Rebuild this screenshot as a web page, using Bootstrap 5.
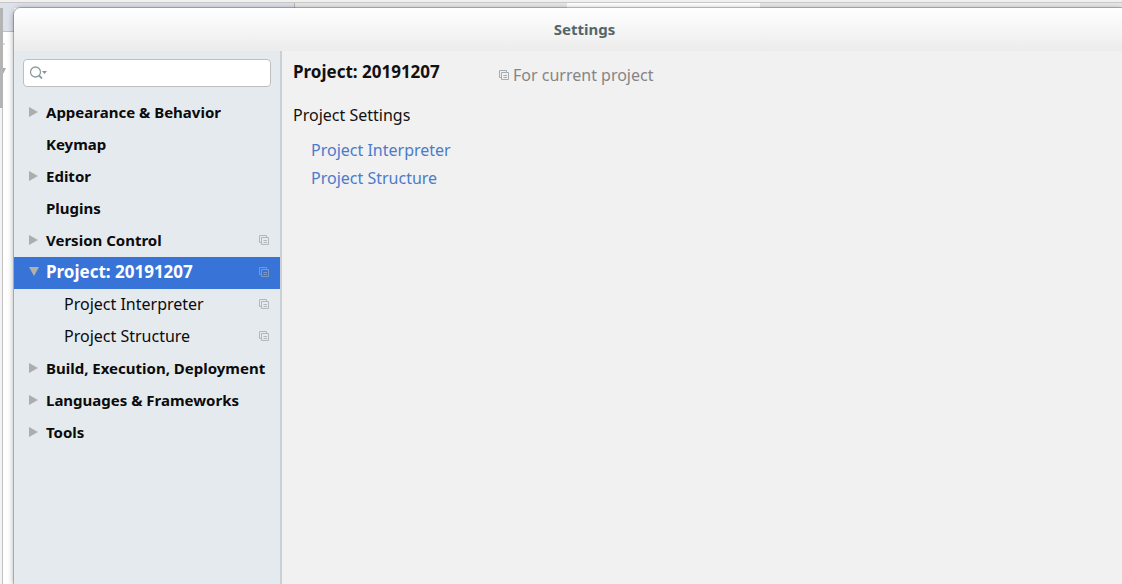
<!DOCTYPE html>
<html lang="en">
<head>
<meta charset="utf-8">
<meta name="viewport" content="width=device-width, initial-scale=1">
<title>Settings</title>
<link href="https://cdn.jsdelivr.net/npm/bootstrap@5.3.0/dist/css/bootstrap.min.css" rel="stylesheet">
<style>
  body { font-family: "Noto Sans", "Open Sans", sans-serif; font-size: 16px; line-height: 20px; color: #111; background: #fff; }
  .desktop { padding: 8px 0 0 14px; isolation: isolate; }

  /* main editor window, visible behind the dialog */
  .editor-behind { z-index: -1; }
  .editor-top { height: 8px; background: #e8e8e8; border-top: 2px solid #f0f0ee; }
  .editor-top::before { content: ""; display: block; height: 1px; background: #c8c8c8; }
  .editor-tabs { height: 5px; }
  .tab-project { flex: 0 0 295px; background: #dde1ea; border-right: 1px solid #b8b8b8; }
  .tab-active { flex: 0 0 193px; margin-left: 272px; background: #fff; }
  .gutter-head { height: 24px; background: #dde1ea; border-bottom: 1px solid #c0c0c0; }
  .gutter { width: 14px; }
  .gutter-edge { width: 3px; border-right: 1px solid #c2c2c2; background: #f4f4f4; }
  .gutter-thumb { height: 100px; width: 3px; background: #b4b4b4; }
  .gutter svg { left: 3px; top: 34px; }

  .dialog { border-radius: 7px 0 0 0; box-shadow: 0 1px 6px rgba(0,0,0,.4), 0 0 0 1px rgba(0,0,0,.2); background: #f1f1f1; overflow: hidden; }
  .titlebar { height: 43px; padding: 0 0 2px 33px; background: linear-gradient(#fff, #ececec); color: #54666c; font-size: 15px; font-weight: 700; }
  .sidebar { flex: 0 0 268px; min-width: 0; background: #e5eaee; border-right: 2px solid #cbd0d4; }
  .search-box { margin: 8px 9px 10px; height: 28px; background: #fff; border: 1px solid #bcbfc2; border-radius: 4px; }
  .search-box input { outline: 0; min-width: 0; }
  .tree-row { height: 32px; padding: 0 10px 2px 14px; color: #0b0b0b; font-size: 15px; font-weight: 700; white-space: nowrap; }
  .tree-row.sub { padding-left: 50px; font-size: 16px; font-weight: 400; }
  .tree-row.active { background: #3874d8; color: #fff; font-size: 17px; }
  .caret-slot { flex: 0 0 18px; height: 12px; }
  .copy-icon { color: #b1b8bd; flex: 0 0 11px; }
  .active .copy-icon { color: #7a99c2; }
  .pane { padding: 11px 11px; }
  .page-title { font-size: 17px; line-height: 20px; font-weight: 700; width: 206px; }
  .scope-note { color: #858585; padding-top: 3px; gap: 3px; }
  .scope-note .copy-icon { color: #a3adb3; }
  .intro { margin-top: 20px; }
  .page-links { margin: 11px 0 0 18px; }
  .page-links a { color: #4b7bcb; line-height: 28px; }
</style>
</head>
<body class="overflow-hidden">
<svg class="d-none" aria-hidden="true">
  <symbol id="copy" viewBox="0 0 11 11"><path d="M2.500 7.500h-2v-7h7v2M2.500 2.500h7v7h-7zM4.500 5.500h3.500M4.500 7.500h3.500" fill="none" stroke="currentColor"/></symbol>
  <symbol id="closed" viewBox="0 0 12 12"><path d="M1 1l9 5-9 5z" fill="#adadad"/></symbol>
  <symbol id="open" viewBox="0 0 12 12"><path d="M1 1h10L6 10z" fill="#b3b0a8"/></symbol>
</svg>

<div class="desktop position-relative vh-100 d-flex flex-column">
  <div class="editor-behind position-absolute top-0 start-0 w-100 h-100 d-flex flex-column" aria-hidden="true">
    <div class="editor-top">
      <div class="editor-tabs d-flex"><div class="tab-project"></div><div class="tab-active"></div></div>
    </div>
    <div class="gutter flex-grow-1 position-relative">
      <div class="gutter-head"></div>
      <div class="gutter-edge position-absolute top-0 h-100"><div class="gutter-thumb"></div></div>
      <svg class="position-absolute" width="6" height="34" viewBox="0 0 6 34"><path d="M0 2h2" stroke="#bbb"/><path d="M0 26h3L0 32z" fill="#aaa"/></svg>
    </div>
  </div>

  <div class="dialog flex-grow-1 d-flex flex-column">
    <header class="titlebar d-flex align-items-center justify-content-center">Settings</header>
    <div class="d-flex flex-grow-1">
      <aside class="sidebar">
        <label class="search-box d-flex align-items-center ps-1">
          <svg class="flex-shrink-0" width="20" height="16" viewBox="0 0 20 16" aria-hidden="true"><circle cx="7.500" cy="7" r="5" fill="none" stroke="#8d9ba2" stroke-width="1.300"/><path d="M11 10.500l3 3" stroke="#8d9ba2" stroke-width="1.800"/><path d="M14 6h5l-2.500 3z" fill="#84939b"/></svg>
          <input type="search" class="border-0 bg-transparent flex-grow-1 p-0" aria-label="Search settings">
        </label>
        <nav aria-label="Settings sections">
          <a href="#" class="tree-row d-flex align-items-center text-decoration-none"><svg class="caret-slot" viewBox="0 0 18 12"><use href="#closed" width="12" height="12"/></svg>Appearance &amp; Behavior</a>
          <a href="#" class="tree-row d-flex align-items-center text-decoration-none"><span class="caret-slot"></span>Keymap</a>
          <a href="#" class="tree-row d-flex align-items-center text-decoration-none"><svg class="caret-slot" viewBox="0 0 18 12"><use href="#closed" width="12" height="12"/></svg>Editor</a>
          <a href="#" class="tree-row d-flex align-items-center text-decoration-none"><span class="caret-slot"></span>Plugins</a>
          <a href="#" class="tree-row d-flex align-items-center text-decoration-none"><svg class="caret-slot" viewBox="0 0 18 12"><use href="#closed" width="12" height="12"/></svg>Version Control<svg class="copy-icon ms-auto" width="11" height="11"><use href="#copy"/></svg></a>
          <a href="#" class="tree-row active d-flex align-items-center text-decoration-none" aria-current="page"><svg class="caret-slot" viewBox="0 0 18 12"><use href="#open" width="12" height="12"/></svg>Project: 20191207<svg class="copy-icon ms-auto" width="11" height="11"><use href="#copy"/></svg></a>
          <a href="#" class="tree-row sub d-flex align-items-center text-decoration-none">Project Interpreter<svg class="copy-icon ms-auto" width="11" height="11"><use href="#copy"/></svg></a>
          <a href="#" class="tree-row sub d-flex align-items-center text-decoration-none">Project Structure<svg class="copy-icon ms-auto" width="11" height="11"><use href="#copy"/></svg></a>
          <a href="#" class="tree-row d-flex align-items-center text-decoration-none"><svg class="caret-slot" viewBox="0 0 18 12"><use href="#closed" width="12" height="12"/></svg>Build, Execution, Deployment</a>
          <a href="#" class="tree-row d-flex align-items-center text-decoration-none"><svg class="caret-slot" viewBox="0 0 18 12"><use href="#closed" width="12" height="12"/></svg>Languages &amp; Frameworks</a>
          <a href="#" class="tree-row d-flex align-items-center text-decoration-none"><svg class="caret-slot" viewBox="0 0 18 12"><use href="#closed" width="12" height="12"/></svg>Tools</a>
        </nav>
      </aside>
      <main class="pane flex-grow-1">
        <div class="d-flex">
          <h1 class="page-title mb-0">Project: 20191207</h1>
          <div class="scope-note d-flex align-items-center"><svg class="copy-icon" width="11" height="11" aria-hidden="true"><use href="#copy"/></svg>For current project</div>
        </div>
        <p class="intro mb-0">Project Settings</p>
        <ul class="page-links list-unstyled">
          <li><a href="#" class="text-decoration-none">Project Interpreter</a></li>
          <li><a href="#" class="text-decoration-none">Project Structure</a></li>
        </ul>
      </main>
    </div>
  </div>
</div>
<script src="https://cdn.jsdelivr.net/npm/bootstrap@5.3.0/dist/js/bootstrap.bundle.min.js"></script>
</body>
</html>
